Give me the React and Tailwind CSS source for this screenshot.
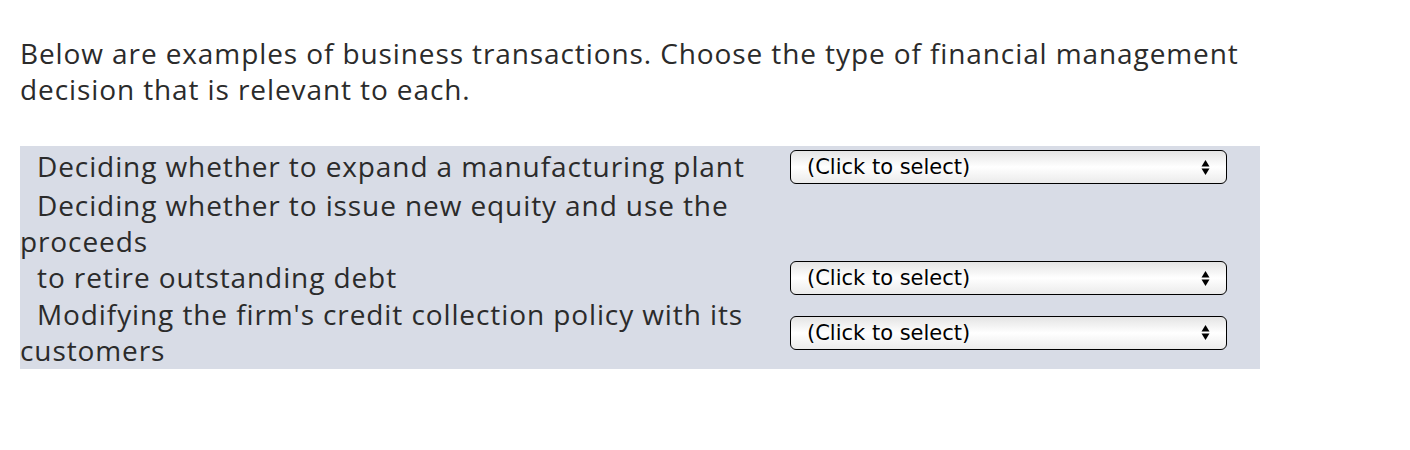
import React from "react";

const rows = [
  { lines: ["Deciding whether to expand a manufacturing plant"], select: true, h: "h-[42px]" },
  { lines: ["Deciding whether to issue new equity and use the", "proceeds"], select: false, h: "h-[72px]" },
  { lines: ["to retire outstanding debt"], select: true, h: "h-[36px]" },
  { lines: ["Modifying the firm's credit collection policy with its", "customers"], select: true, h: "h-[73px]" },
];

function FakeSelect() {
  return (
    <div className="w-[437px] h-[34px] rounded-[6px] border-[1.5px] border-black bg-gradient-to-b from-[#e4e4e4] via-white to-[#ebebeb] flex items-center justify-between pl-[16px] pr-[16px] font-['DejaVu_Sans',sans-serif] text-[21px] tracking-normal text-black">
      <span className="pt-[2px]">(Click to select)</span>
      <svg width="9" height="17" viewBox="0 0 9 17">
        <path d="M4.5 1 L8.5 7.5 L0.5 7.5 Z" fill="#000" />
        <path d="M4.5 16 L8.5 9.5 L0.5 9.5 Z" fill="#000" />
      </svg>
    </div>
  );
}

export default function App() {
  return (
    <div className="w-[1410px] h-[450px] bg-white font-['Open_Sans',sans-serif] text-[#2b2b2b] tracking-[0.9px]">
      <div className="pt-[35px] px-[20px]">
        <p className="text-[28px] leading-[36px] whitespace-nowrap">
          Below are examples of business transactions. Choose the type of financial management
          <br />
          decision that is relevant to each.
        </p>

        <div className="mt-[39px] w-[1240px] bg-[#d8dce6]">
          {rows.map((r, i) => (
            <div key={i} className={`flex items-center ${r.h}`}>
              <div className="w-[770px] text-[28px] leading-[36px] whitespace-nowrap -mt-[2px]">
                <div className="pl-[17px]">{r.lines[0]}</div>
                {r.lines[1] && <div>{r.lines[1]}</div>}
              </div>
              {r.select && <FakeSelect />}
            </div>
          ))}
        </div>
      </div>
    </div>
  );
}
